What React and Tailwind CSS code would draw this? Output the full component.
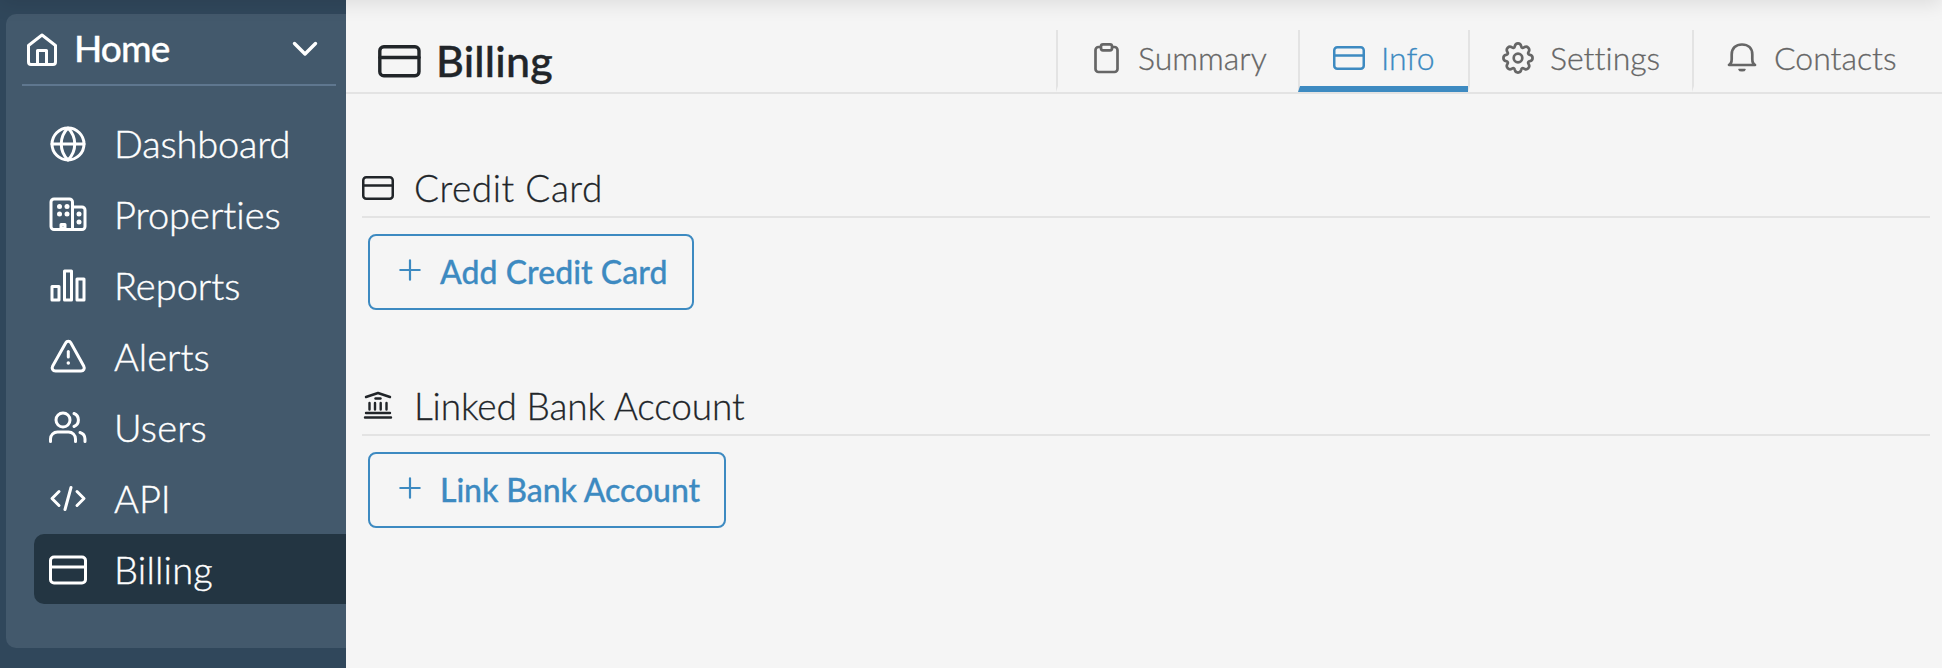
import React from 'react';

// Stroke icon wrapper, drawn at its natural pixel size
const Icon = ({ width, height, stroke = 3, className = "", children }) => (
  <svg
    width={width}
    height={height}
    viewBox={`0 0 ${width} ${height}`}
    fill="none"
    stroke="currentColor"
    strokeWidth={stroke}
    strokeLinecap="round"
    strokeLinejoin="round"
    className={`shrink-0 ${className}`}
  >
    {children}
  </svg>
);

const HomeIcon = () => (
  <Icon width={32} height={34} className="mt-0.5">
    <path d="M2.500 12.500 L16 2 L29.500 12.500 V29 a2.500 2.500 0 0 1 -2.500 2.500 H5 a2.500 2.500 0 0 1 -2.500 -2.500 Z" />
    <path d="M11.500 31 V17.500 H20.500 V31" />
  </Icon>
);

const ChevronIcon = () => (
  <Icon width={26} height={16} stroke={3.4}>
    <path d="M2.500 2.500 L13 13 L23.500 2.500" />
  </Icon>
);

const GlobeIcon = () => (
  <Icon width={40} height={40}>
    <circle cx="20" cy="20" r="16" />
    <path d="M4 20 H36" />
    <path d="M20 4 C11 13 11 27 20 36 C29 27 29 13 20 4 Z" />
  </Icon>
);

const BuildingsIcon = () => (
  <Icon width={40} height={40}>
    <path d="M24.500 34.500 V7 a3 3 0 0 0 -3 -3 H6 a3 3 0 0 0 -3 3 V31.500 a3 3 0 0 0 3 3 H34 a3 3 0 0 0 3 -3 V15 a3 3 0 0 0 -3 -3 H24.500" />
    <path d="M13 33 V29.500 H17 V33 Z" />
    <g fill="currentColor" stroke="none">
      <circle cx="11.500" cy="11.500" r="2.500" />
      <circle cx="19" cy="11.500" r="2.500" />
      <circle cx="11.500" cy="19" r="2.500" />
      <circle cx="19" cy="19" r="2.500" />
      <circle cx="31" cy="19" r="2.500" />
      <circle cx="31" cy="27" r="2.500" />
    </g>
  </Icon>
);

const ChartIcon = () => (
  <Icon width={40} height={40}>
    <rect x="4" y="20.500" width="7" height="13.500" />
    <rect x="16.500" y="5" width="7" height="29" />
    <rect x="29" y="13" width="7" height="21" />
  </Icon>
);

const AlertIcon = () => (
  <Icon width={40} height={40}>
    <path d="M17.800 5.800 L4.700 29 C3.400 31.500 4.800 34 7.500 34 H33 C35.700 34 37 31.500 35.700 29 L22.800 5.800 C21.700 3.700 18.900 3.700 17.800 5.800 Z" />
    <path d="M20.300 14.500 V20" />
    <path d="M20.300 26 V26.100" strokeWidth="3.500" />
  </Icon>
);

const UsersIcon = () => (
  <Icon width={40} height={40}>
    <circle cx="15" cy="12" r="7" />
    <path d="M2.500 33.500 V31 a7 7 0 0 1 7 -7 H20.500 a7 7 0 0 1 7 7 V33.500" />
    <path d="M26 5.500 a7 7 0 0 1 0 13" />
    <path d="M32 24.500 a7 7 0 0 1 5 6.500 V33.500" />
  </Icon>
);

const CodeIcon = () => (
  <Icon width={40} height={40}>
    <path d="M11 12.500 L4 19.500 L11 26.500" />
    <path d="M29 12.500 L36 19.500 L29 26.500" />
    <path d="M23 8.500 L17 30.500" />
  </Icon>
);

const NavCardIcon = () => (
  <Icon width={40} height={40}>
    <rect x="2.500" y="7" width="35" height="26" rx="3.500" />
    <path d="M3 17 H37" />
  </Icon>
);

const TitleCardIcon = () => (
  <Icon width={44} height={34} stroke={3.4}>
    <rect x="1.800" y="2.800" width="39.200" height="29" rx="4" />
    <path d="M2 13.500 H41" />
  </Icon>
);

const CardIcon = ({ className }) => (
  <Icon width={32} height={24} stroke={2.5} className={className}>
    <rect x="1.250" y="1.250" width="29.500" height="21.500" rx="3" />
    <path d="M1.500 9.500 H30.500" />
  </Icon>
);

const ClipboardIcon = () => (
  <Icon width={32} height={32} stroke={2.7}>
    <path d="M10.500 5 H8.500 a3 3 0 0 0 -3 3 V27 a3 3 0 0 0 3 3 H24.500 a3 3 0 0 0 3 -3 V8 a3 3 0 0 0 -3 -3 H22.500" />
    <rect x="11" y="2.300" width="11" height="6" rx="2" />
  </Icon>
);

const GearIcon = () => (
  <Icon width={32} height={32} stroke={2.7}>
    <circle cx="16" cy="16" r="4.300" />
    <path d="M12.800 4.200 C13.600 0.500 18.400 0.500 19.200 4.200 C19.500 5.900 20.600 6.300 22 5.400 C25.200 3.400 28.600 6.800 26.600 10 C25.700 11.400 26.100 12.500 27.800 12.800 C31.500 13.600 31.500 18.400 27.800 19.200 C26.100 19.500 25.700 20.600 26.600 22 C28.600 25.200 25.200 28.600 22 26.600 C20.600 25.700 19.500 26.100 19.200 27.800 C18.400 31.500 13.600 31.500 12.800 27.800 C12.500 26.100 11.400 25.700 10 26.600 C6.800 28.600 3.400 25.200 5.400 22 C6.300 20.600 5.900 19.500 4.200 19.200 C0.500 18.400 0.500 13.600 4.200 12.800 C5.900 12.500 6.300 11.400 5.400 10 C3.400 6.800 6.800 3.400 10 5.400 C11.400 6.300 12.500 5.900 12.800 4.200 Z" />
  </Icon>
);

const BellIcon = () => (
  <Icon width={32} height={32} stroke={2.7}>
    <path d="M3 23 H29 C27 22 26.300 20 26.300 17 V12.500 C26.300 6 22 2.500 16 2.500 C10 2.500 5.700 6 5.700 12.500 V17 C5.700 20 5 22 3 23 Z" />
    <path d="M13 27.500 H19 C18.500 29.300 13.500 29.300 13 27.500 Z" strokeWidth="1.500" fill="currentColor" />
  </Icon>
);

const BankIcon = () => (
  <Icon width={32} height={30} stroke={2.4}>
    <path d="M4 7 L16 3 L28 7" />
    <path d="M13.500 8.500 H18.500" />
    <path d="M7.500 13 V19.500 M13 13 V19.500 M18.700 13 V19.500 M24.500 13 V19.500" />
    <path d="M4 23 H28 M3 27.500 H29" />
  </Icon>
);

const PlusIcon = () => (
  <Icon width={22} height={22} stroke={2.2} className="mb-1">
    <path d="M11 1.300 V20.700 M1.300 11 H20.700" />
  </Icon>
);

const navItems = [
  { label: 'Dashboard', icon: <GlobeIcon />, tracking: "tracking-[-0.15px]" },
  { label: 'Properties', icon: <BuildingsIcon /> },
  { label: 'Reports', icon: <ChartIcon /> },
  { label: 'Alerts', icon: <AlertIcon /> },
  { label: 'Users', icon: <UsersIcon />, tracking: "tracking-[0.2px]" },
  { label: 'API', icon: <CodeIcon /> },
  { label: 'Billing', icon: <NavCardIcon />, tracking: "tracking-[0.2px]", active: true },
];

const tabs = [
  { label: 'Summary', icon: <ClipboardIcon />, size: "w-[242px] pl-8" },
  { label: 'Info', icon: <CardIcon />, size: "w-[170px] pl-[33px]", active: true },
  { label: 'Settings', icon: <GearIcon />, size: "w-[224px] pl-8" },
  { label: 'Contacts', icon: <BellIcon />, size: "w-[238px] pl-8" },
];

const Sidebar = () => (
  <aside className="w-[346px] h-full shrink-0 bg-[#30475b] pl-1.5 pt-3.5 pb-5 text-white">
    <div className="h-full rounded-l-[10px] bg-[#43596c] pl-4">
      <div className="mr-2.5 h-[72px] border-b-2 border-[#5f778f] flex items-center pl-1 pr-[18px]">
        <HomeIcon />
        <span className="ml-4 mb-[3px] text-[37px] leading-none font-medium tracking-[-0.9px] [-webkit-text-stroke:0.3px]">Home</span>
        <span className="ml-auto"><ChevronIcon /></span>
      </div>
      <nav className="mt-[22px] ml-3 flex flex-col gap-px">
        {navItems.map((item) => (
          <a
            key={item.label}
            className={`h-[70px] flex items-center pl-3.5 rounded-l-[10px] ${item.active ? "bg-[#233542]" : ""}`}
          >
            <span className="mt-0.5">{item.icon}</span>
            <span className={`ml-[26px] text-[38px] leading-none font-light [-webkit-text-stroke:0.4px] ${item.tracking || ""}`}>
              {item.label}
            </span>
          </a>
        ))}
      </nav>
    </div>
  </aside>
);

const Tab = ({ tab }) => (
  <a
    className={`h-[62px] flex items-center border-l-2 border-l-[#e3e3e3] border-b-[6px] text-[32px] leading-none font-light [-webkit-text-stroke:0.3px] ${tab.size} ${
      tab.active ? "border-b-[#3d8ac1] text-[#3d8ac1]" : "border-b-transparent text-[#666666]"
    }`}
  >
    {tab.icon}
    <span className="ml-4">{tab.label}</span>
  </a>
);

const Section = ({ title, titleClass, icon, action, actionClass }) => (
  <section className="h-[218px]">
    <h2 className="h-[60px] border-b-2 border-[#e3e3e3] flex items-center text-[37px] leading-none font-light [-webkit-text-stroke:0.3px]">
      {icon}
      <span className={`ml-5 ${titleClass}`}>{title}</span>
    </h2>
    <button className={`mt-4 ml-1.5 h-[76px] border-2 border-[#3d8ac1] rounded-lg flex items-center pl-[29px] text-[#3d8ac1] text-[32px] leading-none font-medium [-webkit-text-stroke:0.3px] ${actionClass}`}>
      <PlusIcon />
      <span className="ml-[19px] whitespace-nowrap">{action}</span>
    </button>
  </section>
);

const App = () => (
  <div className="relative w-full h-[668px] overflow-hidden flex bg-[#f5f5f5] text-[#212529] font-['Lato',sans-serif] [font-variant-ligatures:none]">
    <Sidebar />
    <main className="grow">
      <header className="h-[94px] border-b-2 border-[#e3e3e3] flex items-end justify-between pl-8 pr-3">
        <h1 className="h-[62px] flex items-center text-[43px] leading-none font-medium">
          <TitleCardIcon />
          <span className="ml-3.5 mb-0.5 tracking-[0.2px] [-webkit-text-stroke:0.4px]">Billing</span>
        </h1>
        <nav className="flex">
          {tabs.map((tab) => <Tab key={tab.label} tab={tab} />)}
        </nav>
      </header>
      <div className="pl-4 pr-3 pt-16">
        <Section
          title="Credit Card"
          titleClass="tracking-[0.55px]"
          icon={<CardIcon className="mt-0.5" />}
          action="Add Credit Card"
          actionClass="w-[326px] tracking-[0.05px]"
        />
        <Section
          title="Linked Bank Account"
          titleClass="tracking-[-0.13px]"
          icon={<BankIcon />}
          action="Link Bank Account"
          actionClass="w-[358px] tracking-[-0.08px]"
        />
      </div>
    </main>
    {/* shadow of the navbar above */}
    <div className="absolute inset-x-0 -top-10 h-10 shadow-[0_4px_20px_rgba(0,0,0,0.1)]" />
  </div>
);

export default App;
